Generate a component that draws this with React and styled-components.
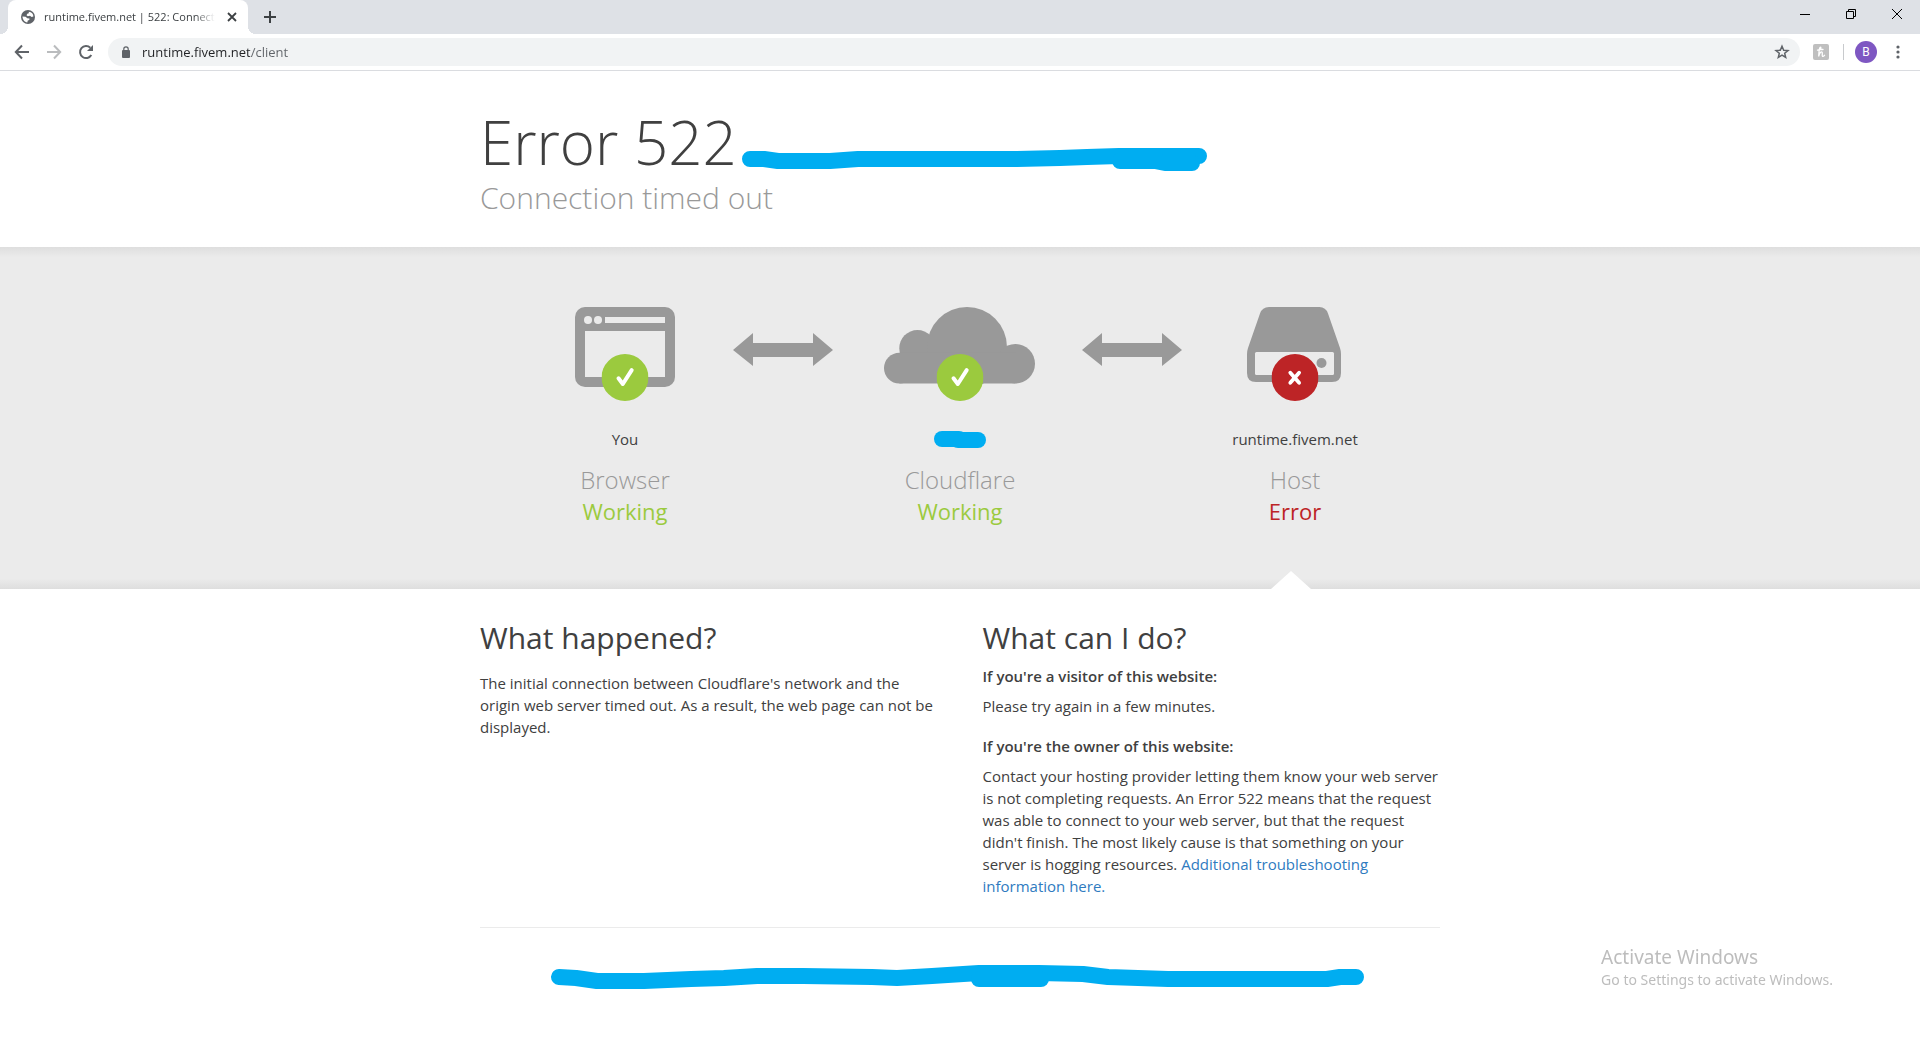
import React from "react";
import styled, { createGlobalStyle } from "styled-components";

const GlobalStyle = createGlobalStyle`
  * { box-sizing: border-box; }
  body {
    margin: 0;
    background: #fff;
    color: #404040;
    font: 15px/22px "Open Sans", "Noto Sans", sans-serif;
  }
  h1, h2, h3, p { margin: 0; }
  svg { display: block; flex: none; }
`;

/* ---------- browser frame ---------- */

const TabStrip = styled.div`
  display: flex;
  height: 34px;
  padding-left: 8px;
  background: #dee1e6;
`;

const Tab = styled.div`
  position: relative;
  display: flex;
  align-items: center;
  gap: 9px;
  width: 240px;
  padding: 0 8px 0 13px;
  border-radius: 8px 8px 0 0;
  background: #fff;

  &::before,
  &::after {
    content: "";
    position: absolute;
    bottom: 0;
    width: 8px;
    height: 8px;
  }
  &::before {
    left: -8px;
    background: radial-gradient(circle at 0 0, #dee1e6 8px, #fff 8px);
  }
  &::after {
    right: -8px;
    background: radial-gradient(circle at 100% 0, #dee1e6 8px, #fff 8px);
  }
`;

const TabTitle = styled.span`
  flex: 1;
  min-width: 0;
  white-space: nowrap;
  color: #3c4043;
  font-size: 11px;
  line-height: 16px;
  mask-image: linear-gradient(90deg, #000 calc(100% - 20px), transparent);
`;

const IconButton = styled.button`
  display: grid;
  place-items: center;
  width: ${(p) => p.$width || 32}px;
  height: ${(p) => p.$height || 28}px;
  padding: 0;
  border: 0;
  background: none;
  color: ${(p) => p.$color || "#5f6368"};
`;

const WindowControls = styled.div`
  display: flex;
  margin-left: auto;
`;

const Toolbar = styled.div`
  display: flex;
  align-items: center;
  height: 37px;
  padding: 0 6px;
  border-bottom: 1px solid #dadce0;
`;

const AddressBar = styled.label`
  display: flex;
  flex: 1;
  align-items: center;
  height: 28px;
  margin: 0 5px 0 6px;
  padding-left: 14px;
  border-radius: 14px;
  background: #f1f3f4;
`;

const AddressInput = styled.input`
  flex: 1;
  margin-left: 12px;
  padding: 0;
  border: 0;
  outline: 0;
  background: linear-gradient(90deg, #202124 108px, #5f6368 108px);
  background-clip: text;
  -webkit-text-fill-color: transparent;
  font: 13px/20px "Open Sans", "Noto Sans", sans-serif;
`;

const Divider = styled.span`
  width: 1px;
  height: 16px;
  margin: 0 6px;
  background: #c8cacd;
`;

const Avatar = styled.span`
  display: grid;
  place-items: center;
  width: 22px;
  height: 22px;
  border-radius: 50%;
  background: #7e57c2;
  color: #fff;
  font: 12px/22px Roboto, sans-serif;
`;

/* ---------- error page ---------- */

const Container = styled.div`
  width: 100%;
  max-width: 960px;
  margin: 0 auto;
`;

const Header = styled.header`
  padding: 35px 0 31px;
`;

const TitleRow = styled.div`
  display: flex;
  align-items: flex-end;
  gap: 4px;
  margin-bottom: 2px;
`;

const Title = styled.h1`
  font-size: 60px;
  font-weight: 300;
  line-height: 72px;
  white-space: nowrap;
`;

const TitleStroke = styled.div`
  padding-bottom: 7px;
`;

const Subtitle = styled.h2`
  color: #999;
  font-size: 30px;
  font-weight: 300;
  line-height: 36px;
`;

const Stage = styled.section`
  background: linear-gradient(#dedede, #ebebeb 3%, #ebebeb 97%, #dedede);
`;

const Path = styled(Container)`
  display: grid;
  grid-template-columns: 190px 126px 228px 116px 210px;
  padding-left: 50px;
`;

const Node = styled.div`
  position: relative;
  display: flex;
  flex-direction: column;
  align-items: center;
  padding: 60px 0 62px;

  ${(p) =>
    p.$pointer &&
    `&::after {
      content: "";
      position: absolute;
      bottom: 0;
      left: calc(50% - 24px);
      width: 40px;
      height: 18px;
      background: #fff;
      clip-path: polygon(50% 0, 100% 100%, 0 100%);
    }`}
`;

const Picture = styled.div`
  position: relative;
  height: 94px;
  margin-bottom: 27px;
`;

const Badge = styled.div`
  position: absolute;
  bottom: 0;
  left: 50%;
  transform: translateX(-50%);
`;

const Place = styled.div`
  display: flex;
  align-items: center;
  height: 22px;
  margin-bottom: 14px;
`;

const NodeName = styled.h3`
  color: #999;
  font-size: 24px;
  font-weight: 300;
  line-height: 32px;
`;

const NodeStatus = styled.span`
  color: ${(p) => (p.$ok ? "#9bca3e" : "#bd2426")};
  font-size: 22px;
  line-height: 31px;
`;

const Between = styled.div`
  display: flex;
  justify-content: center;
  padding-top: 86px;
`;

const Details = styled(Container)`
  display: grid;
  grid-template-columns: 1fr 1fr;
  gap: 45px;
  padding: 31px 0 30px;
`;

const SectionTitle = styled.h2`
  margin-bottom: ${(p) => p.$gap}px;
  font-size: 30px;
  font-weight: 400;
  line-height: 36px;
`;

const Lead = styled.h3`
  margin-bottom: 8px;
  font-size: 15px;
  font-weight: 600;
  line-height: 22px;

  p + & {
    margin-top: 18px;
  }
`;

const Link = styled.a`
  color: #2f7bbf;
  text-decoration: none;
`;

const Footer = styled(Container)`
  display: flex;
  justify-content: center;
  padding: 36px 6px 0 0;
  border-top: 1px solid #ebebeb;
`;

const Watermark = styled.aside`
  position: fixed;
  right: 87px;
  bottom: 50px;
  color: #bdbdbd;
  font: 14px/20px "Noto Sans", "Open Sans", sans-serif;
`;

const WatermarkTitle = styled.div`
  font-size: 19px;
  line-height: 25px;
`;

/* ---------- drawings ---------- */

function Stroke({ box, paths }) {
  const [, , width, height] = box;
  return (
    <svg width={width} height={height} viewBox={box.join(" ")} aria-hidden="true">
      {paths.map((d) => (
        <path key={d} d={d} fill="none" stroke="#00adf1" strokeWidth="16" strokeLinecap="round" strokeLinejoin="round" />
      ))}
    </svg>
  );
}

const CheckBadge = () => (
  <svg width="47" height="47" viewBox="0 0 47 47">
    <circle cx="23.5" cy="23.5" r="23.5" fill="#9bca3e" />
    <path d="M17 24.3 21.3 30 30.2 16.2" fill="none" stroke="#fff" strokeWidth="4" strokeLinecap="round" strokeLinejoin="round" />
  </svg>
);

const CrossBadge = () => (
  <svg width="47" height="47" viewBox="0 0 47 47">
    <circle cx="23.5" cy="23.5" r="23.5" fill="#bd2426" />
    <path d="M18.8 18.8 27.6 28.8M27.6 18.8 18.8 28.8" fill="none" stroke="#fff" strokeWidth="3.8" strokeLinecap="round" />
  </svg>
);

const BrowserPicture = () => (
  <svg width="100" height="80" viewBox="0 0 100 80">
    <rect width="100" height="80" rx="10" fill="#999" />
    <circle cx="13" cy="13" r="4" fill="#ebebeb" />
    <circle cx="23" cy="13" r="4" fill="#ebebeb" />
    <path d="M30 10h60v6H30zM10 24h80v46H10z" fill="#ebebeb" />
  </svg>
);

const CloudPicture = () => (
  <svg width="152" height="77" viewBox="0 0 152 77" fill="#999">
    <circle cx="15.4" cy="61.1" r="15.4" />
    <circle cx="33.5" cy="41.2" r="18.2" />
    <circle cx="83" cy="40" r="40" />
    <circle cx="131.3" cy="56.8" r="19.7" />
    <path d="M15.4 45.7H131.3V76.5H15.4z" />
  </svg>
);

const ServerPicture = () => (
  <svg width="96" height="75" viewBox="0 0 96 75">
    <path
      d="M22 0H72.4Q78.800 0 81 6.500L93 41Q94 44 94 47V66Q94 75 85 75H9Q0 75 0 66V47Q0 44 1 41L13 6.500Q15.200 0 22 0Z"
      fill="#999"
    />
    <rect x="8" y="45" width="79" height="23" rx="1.500" fill="#ebebeb" />
    <circle cx="74.500" cy="56" r="5" fill="#999" />
  </svg>
);

const Arrow = () => (
  <svg width="100" height="33" viewBox="0 0 100 33">
    <path d="M0 17 20 0V10H80V0L100 17 80 33V24H20V33Z" fill="#999" />
  </svg>
);

const Glyph = ({ size = 16, children }) => (
  <svg width={size} height={size} viewBox="0 0 16 16" fill="none" stroke="currentColor" strokeWidth="2">
    {children}
  </svg>
);

function ChromeFrame() {
  return (
    <>
      <TabStrip>
        <Tab>
          <svg width="14" height="14" viewBox="0 0 14 14">
            <circle cx="7" cy="7" r="7" fill="#5f6368" />
            <path d="M7.800 1.800C10.700 2 12.400 4.300 12.400 6.500L10.600 7 9 5.700 6.800 6.300 5.500 5.200 6.300 3.700 7.800 3.300Z" fill="#fff" />
            <path d="M1.500 6.600 4.600 6.700 6.300 8.200 8.500 8.400 8.300 10 6.800 10.600 6.300 12.500C3.500 12.300 1.500 9.500 1.500 6.600Z" fill="#fff" />
          </svg>
          <TabTitle>runtime.fivem.net | 522: Connecti</TabTitle>
          <IconButton $width={16} $height={16} $color="#3c4043" aria-label="Close tab">
            <Glyph><path d="M4 4 12 12M12 4 4 12" strokeWidth="1.800" /></Glyph>
          </IconButton>
        </Tab>
        <IconButton $width={44} $height={34} $color="#3c4043" aria-label="New tab">
          <Glyph><path d="M8 2V14M2 8H14" /></Glyph>
        </IconButton>
        <WindowControls>
          <IconButton $width={46} $height={27} $color="#000" aria-label="Minimize">
            <svg width="10" height="10" viewBox="0 0 10 10"><path d="M0 5.500H10" stroke="currentColor" /></svg>
          </IconButton>
          <IconButton $width={46} $height={27} $color="#000" aria-label="Restore">
            <svg width="10" height="10" viewBox="0 0 10 10" fill="none" stroke="currentColor">
              <path d="M.5 2.500H7.500V9.500H.5ZM2.500 2.500V.5H9.500V7.500H7.500" />
            </svg>
          </IconButton>
          <IconButton $width={46} $height={27} $color="#000" aria-label="Close">
            <svg width="10" height="10" viewBox="0 0 10 10"><path d="M0 0 10 10M10 0 0 10" stroke="currentColor" /></svg>
          </IconButton>
        </WindowControls>
      </TabStrip>
      <Toolbar>
        <IconButton aria-label="Back">
          <Glyph><path d="M15 8H2M8 1.500 1.800 8 8 14.500" /></Glyph>
        </IconButton>
        <IconButton $color="#babcbe" aria-label="Forward">
          <Glyph><path d="M1 8H14M8 1.500 14.200 8 8 14.500" /></Glyph>
        </IconButton>
        <IconButton aria-label="Reload">
          <Glyph>
            <path d="M13.300 11A6 6 0 1 1 12.300 3.800" />
            <path d="M15 1V7H9Z" fill="currentColor" stroke="none" />
          </Glyph>
        </IconButton>
        <AddressBar>
          <svg width="8" height="12" viewBox="1 0 8 12">
            <rect x="1" y="4" width="8" height="8" rx="1" fill="#5f6368" />
            <path d="M2.800 5V3A2.200 2.200 0 0 1 7.200 3V5" fill="none" stroke="#5f6368" strokeWidth="1.200" />
          </svg>
          <AddressInput aria-label="Address" defaultValue="runtime.fivem.net/client" spellCheck={false} />
          <IconButton $width={36} aria-label="Bookmark">
            <Glyph>
              <path d="M8 2.200 9.700 6.200 14 6.500 10.700 9.300 11.700 13.500 8 11.200 4.300 13.500 5.300 9.300 2 6.500 6.300 6.200Z" strokeWidth="1.500" />
            </Glyph>
          </IconButton>
        </AddressBar>
        <IconButton aria-label="Extension">
          <svg width="16" height="16" viewBox="0 0 16 16">
            <rect width="16" height="16" rx="2" fill="#bfbfbf" />
            <path
              d="M4.500 6.200C6.500 6 8.500 4.500 7.800 3.300 6.500 2.800 6 6 5.700 12.500 6.200 9.500 7.800 7.600 9 8 10 8.600 8.500 11.800 9.600 12.400 10.500 12.600 11.200 12 11.600 11.300M7.500 5.500H10"
              fill="none" stroke="#fff" strokeWidth="1.300" strokeLinecap="round"
            />
          </svg>
        </IconButton>
        <Divider />
        <IconButton aria-label="Profile">
          <Avatar>B</Avatar>
        </IconButton>
        <IconButton aria-label="Menu">
          <svg width="4" height="14" viewBox="0 0 4 14" fill="#5f6368">
            <circle cx="2" cy="2" r="1.600" />
            <circle cx="2" cy="7" r="1.600" />
            <circle cx="2" cy="12" r="1.600" />
          </svg>
        </IconButton>
      </Toolbar>
    </>
  );
}

function PathNode({ picture, place, name, ok }) {
  return (
    <Node $pointer={!ok}>
      <Picture>
        {picture}
        <Badge>{ok ? <CheckBadge /> : <CrossBadge />}</Badge>
      </Picture>
      <Place>{place}</Place>
      <NodeName>{name}</NodeName>
      <NodeStatus $ok={ok}>{ok ? "Working" : "Error"}</NodeStatus>
    </Node>
  );
}

export default function App() {
  return (
    <>
      <GlobalStyle />
      <ChromeFrame />
      <main>
        <Container>
          <Header>
            <TitleRow>
              <Title>Error 522</Title>
              <TitleStroke>
                <Stroke
                  box={[741, 147, 467, 24]}
                  paths={[
                    "M750 159H764L778 161H830L858 159H1017L1060 158 1087 157 1119 156H1199",
                    "M1120 161H1155L1165 163H1192",
                  ]}
                />
              </TitleStroke>
            </TitleRow>
            <Subtitle>Connection timed out</Subtitle>
          </Header>
        </Container>
        <Stage>
          <Path>
            <PathNode picture={<BrowserPicture />} place="You" name="Browser" ok />
            <Between><Arrow /></Between>
            <PathNode
              picture={<CloudPicture />}
              place={<Stroke box={[934, 432, 52, 17]} paths={["M942 440H959", "M958 441H978"]} />}
              name="Cloudflare"
              ok
            />
            <Between><Arrow /></Between>
            <PathNode picture={<ServerPicture />} place="runtime.fivem.net" name="Host" ok={false} />
          </Path>
        </Stage>
        <Details>
          <section>
            <SectionTitle $gap={16}>What happened?</SectionTitle>
            <p>
              The initial connection between Cloudflare's network and the origin web server timed out. As a
              result, the web page can not be displayed.
            </p>
          </section>
          <section>
            <SectionTitle $gap={9}>What can I do?</SectionTitle>
            <Lead>If you're a visitor of this website:</Lead>
            <p>Please try again in a few minutes.</p>
            <Lead>If you're the owner of this website:</Lead>
            <p>
              Contact your hosting provider letting them know your web server is not completing requests. An
              Error 522 means that the request was able to connect to your web server, but that the request
              didn't finish. The most likely cause is that something on your server is hogging resources.{" "}
              <Link href="#troubleshooting">Additional troubleshooting information here.</Link>
            </p>
          </section>
        </Details>
        <Footer as="footer">
          <Stroke
            box={[550, 965, 815, 25]}
            paths={[
              "M559 978 576 979 597 982H644L691 980 724 979 757 977H803L872 978 897 979 932 977 979 974H1039L1083 975 1108 978 1138 979 1168 980H1327L1340 978H1356",
              "M979 980H1041",
            ]}
          />
        </Footer>
      </main>
      <Watermark>
        <WatermarkTitle>Activate Windows</WatermarkTitle>
        Go to Settings to activate Windows.
      </Watermark>
    </>
  );
}
